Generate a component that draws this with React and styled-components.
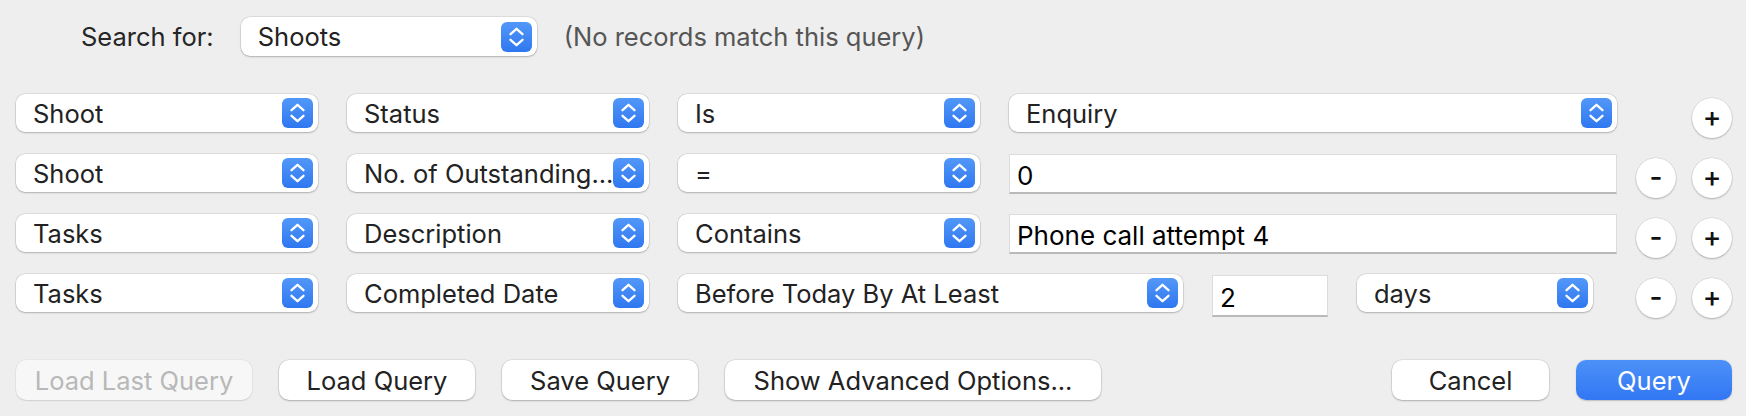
import React from 'react';
import styled, { createGlobalStyle } from 'styled-components';

const fontStack = `Inter, "Liberation Sans", Arial, sans-serif`;

const GlobalStyle = createGlobalStyle`
    html, body {
        margin: 0;
        padding: 0;
        background: #eeeeee;
    }
    body {
        font-family: ${fontStack};
        -webkit-font-smoothing: antialiased;
    }
`;

const Page = {
    Wrapper: styled.div`
        width: 1746px;
        height: 416px;
        box-sizing: border-box;
        padding: 17px 14px 0 16px;
        background: #eeeeee;
        color: #222222;
        font-size: 25.5px;
    `,
    SearchRow: styled.div`
        display: flex;
        align-items: center;
        gap: 27px;
        padding-left: 65px;
        height: 39px;
    `,
    Label: styled.span`
        color: #262626;
    `,
    Note: styled.span`
        color: #555555;
    `,
    Criteria: styled.div`
        display: flex;
        flex-direction: column;
        gap: 22px;
        margin-top: 38px;
    `,
    Footer: styled.div`
        display: flex;
        align-items: center;
        gap: 27px;
        margin-top: 48px;
    `,
    Spacer: styled.div`
        flex: 1;
    `
};

const Row = {
    Line: styled.div`
        display: flex;
        align-items: flex-start;
        height: 38px;
    `,
    Fields: styled.div`
        display: flex;
        align-items: flex-start;
        gap: 29px;
        width: 1604px;
    `,
    Actions: styled.div`
        display: flex;
        justify-content: flex-end;
        gap: 16px;
        width: 112px;
        margin-top: 4px;
    `,
    RoundButton: styled.button`
        width: 40px;
        height: 40px;
        border-radius: 50%;
        border: none;
        background: #ffffff;
        box-shadow: 0 0 0 0.5px rgba(0, 0, 0, 0.12), 0 1px 2px rgba(0, 0, 0, 0.22);
        font-family: ${fontStack};
        font-size: 28px;
        font-weight: 500;
        line-height: 1;
        color: #111111;
        padding: 0 0 3px 0;
        display: flex;
        align-items: center;
        justify-content: center;
    `
};

const SelectStyle = {
    Box: styled.div`
        display: flex;
        align-items: center;
        justify-content: space-between;
        box-sizing: border-box;
        width: ${props => props.$w}px;
        height: ${props => props.$h || 38}px;
        padding: 0 5px 0 17px;
        background: #ffffff;
        border-radius: 9px;
        box-shadow: 0 0 0 0.5px rgba(0, 0, 0, 0.14), 0 1px 2px rgba(0, 0, 0, 0.2);
        flex: none;
    `,
    Text: styled.span`
        white-space: nowrap;
        overflow: hidden;
        color: #222222;
    `,
    Stepper: styled.span`
        flex: none;
        width: 31px;
        height: 30px;
        border-radius: 6px;
        background: linear-gradient(#5298f8, #2f77f0);
        display: flex;
    `
};

const TextField = styled.div`
    box-sizing: border-box;
    width: ${props => props.$w}px;
    height: ${props => props.$h || 40}px;
    margin-top: ${props => props.$top || 0}px;
    padding: 4px 0 0 7px;
    background: #ffffff;
    border: 1px solid #dcdcdc;
    border-bottom: 2px solid #b9b9b9;
    display: flex;
    align-items: center;
    color: #000000;
    font-size: 26px;
    flex: none;
`;

const Button = styled.button`
    box-sizing: border-box;
    width: ${props => props.$w}px;
    height: 40px;
    border: none;
    border-radius: 10px;
    font-family: ${fontStack};
    font-size: 25.5px;
    padding: 0;
    background: ${props => props.$primary ? 'linear-gradient(#4c91f8, #3277f3)' : props.$disabled ? '#f7f7f7' : '#ffffff'};
    color: ${props => props.$primary ? '#ffffff' : props.$disabled ? '#b8b8b8' : '#222222'};
    box-shadow: ${props => props.$primary
        ? '0 0.5px 1.5px rgba(0, 0, 0, 0.2)'
        : props.$disabled
            ? '0 0 0 0.5px rgba(0, 0, 0, 0.06), 0 1px 1.5px rgba(0, 0, 0, 0.1)'
            : '0 0 0 0.5px rgba(0, 0, 0, 0.12), 0 1px 2px rgba(0, 0, 0, 0.22)'};
`;

function Chevrons() {
    return (
        <svg width="31" height="30" viewBox="0 0 31 30">
            <path d="M9.5 12.2 L15.5 6.8 L21.5 12.2" fill="none" stroke="#ffffff" strokeWidth="2.3" strokeLinecap="round" strokeLinejoin="round"/>
            <path d="M9.5 17.8 L15.5 23.2 L21.5 17.8" fill="none" stroke="#ffffff" strokeWidth="2.3" strokeLinecap="round" strokeLinejoin="round"/>
        </svg>
    );
}

function Select({ value, width, height }) {
    return (
        <SelectStyle.Box $w={width} $h={height}>
            <SelectStyle.Text>{value}</SelectStyle.Text>
            <SelectStyle.Stepper>
                <Chevrons/>
            </SelectStyle.Stepper>
        </SelectStyle.Box>
    );
}

function RowActions({ canRemove }) {
    return (
        <Row.Actions>
            {canRemove && <Row.RoundButton>-</Row.RoundButton>}
            <Row.RoundButton>+</Row.RoundButton>
        </Row.Actions>
    );
}

const colWidth = 302;

function App() {
    return (
        <Page.Wrapper>
            <GlobalStyle/>
            <Page.SearchRow>
                <Page.Label>Search for:</Page.Label>
                <Select value="Shoots" width={296} height={39}/>
                <Page.Note>(No records match this query)</Page.Note>
            </Page.SearchRow>

            <Page.Criteria>
                <Row.Line>
                    <Row.Fields>
                        <Select value="Shoot" width={colWidth}/>
                        <Select value="Status" width={colWidth}/>
                        <Select value="Is" width={colWidth}/>
                        <Select value="Enquiry" width={608}/>
                    </Row.Fields>
                    <RowActions/>
                </Row.Line>
                <Row.Line>
                    <Row.Fields>
                        <Select value="Shoot" width={colWidth}/>
                        <Select value="No. of Outstanding..." width={colWidth}/>
                        <Select value="=" width={colWidth}/>
                        <TextField $w={608}>0</TextField>
                    </Row.Fields>
                    <RowActions canRemove/>
                </Row.Line>
                <Row.Line>
                    <Row.Fields>
                        <Select value="Tasks" width={colWidth}/>
                        <Select value="Description" width={colWidth}/>
                        <Select value="Contains" width={colWidth}/>
                        <TextField $w={608}>Phone call attempt 4</TextField>
                    </Row.Fields>
                    <RowActions canRemove/>
                </Row.Line>
                <Row.Line>
                    <Row.Fields>
                        <Select value="Tasks" width={colWidth}/>
                        <Select value="Completed Date" width={colWidth}/>
                        <Select value="Before Today By At Least" width={505}/>
                        <TextField $w={116} $h={42} $top={1}>2</TextField>
                        <Select value="days" width={236}/>
                    </Row.Fields>
                    <RowActions canRemove/>
                </Row.Line>
            </Page.Criteria>

            <Page.Footer>
                <Button $w={236} $disabled>Load Last Query</Button>
                <Button $w={196}>Load Query</Button>
                <Button $w={196}>Save Query</Button>
                <Button $w={376}>Show Advanced Options...</Button>
                <Page.Spacer/>
                <Button $w={157}>Cancel</Button>
                <Button $w={156} $primary>Query</Button>
            </Page.Footer>
        </Page.Wrapper>
    );
}

export default App;
